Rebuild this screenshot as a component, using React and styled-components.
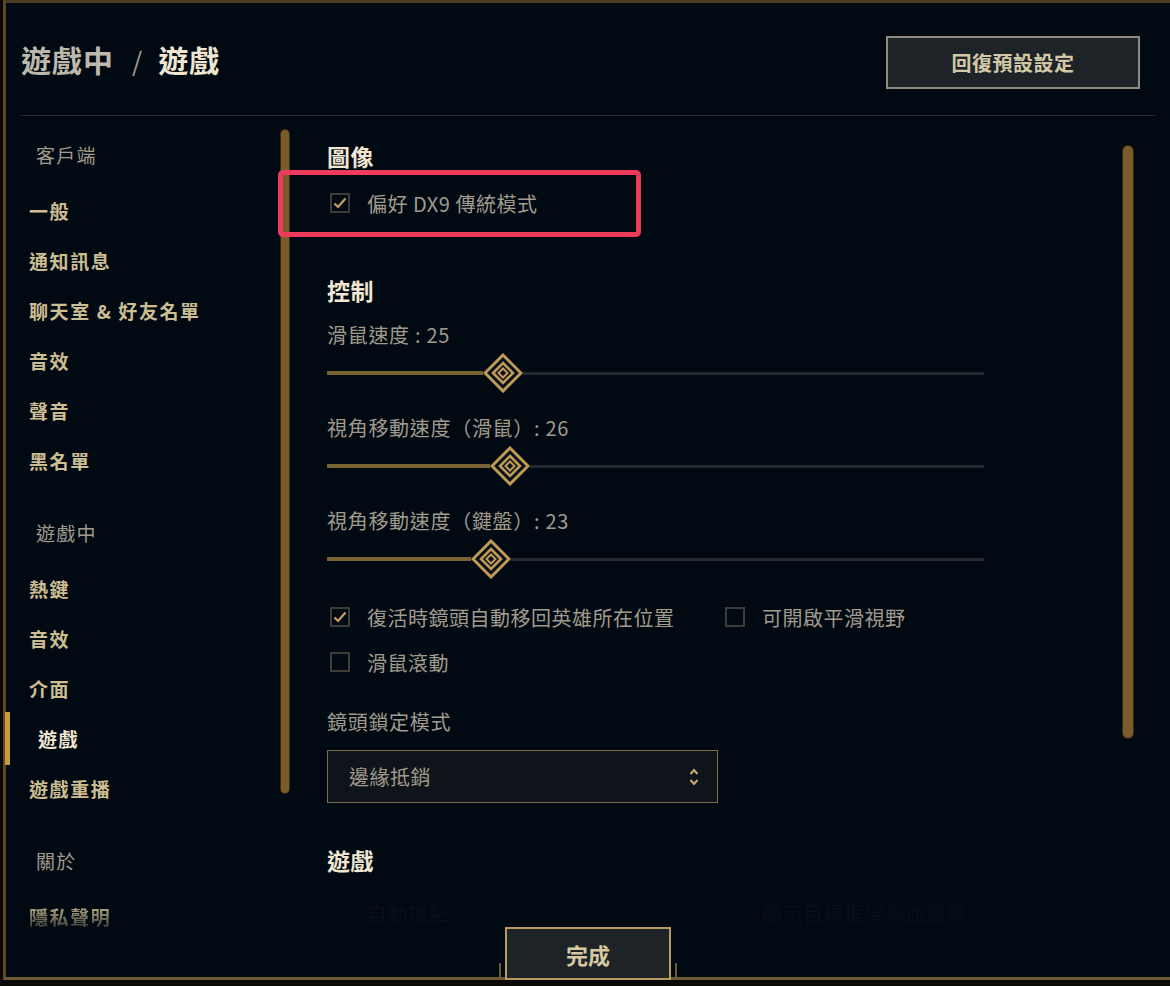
import React from 'react';
import styled, { createGlobalStyle, css } from 'styled-components';

const GlobalStyle = createGlobalStyle`
  html, body { margin: 0; padding: 0; background: #0b0906; }
  body { font-family: "Noto Sans CJK TC", "Noto Sans", sans-serif; overflow: hidden; }
  *, *::before, *::after { box-sizing: border-box; }
`;

const Page = styled.div`
  width: 1170px;
  height: 986px;
  padding-left: 3px;
  overflow: hidden;
  background: #0b0906;
`;

const Frame = styled.div`
  position: relative;
  width: 1167px;
  height: 980px;
  background: #010a13;
  border-top: 3px solid #4f3f22;
  border-left: 3px solid #5a4828;
  border-bottom: 3px solid #6e5b36;
  display: flex;
  flex-direction: column;
`;

const Header = styled.header`
  height: 112px;
  flex-shrink: 0;
  display: flex;
  align-items: center;
  justify-content: space-between;
  padding: 0 30px 0 15px;
`;

const Title = styled.h1`
  margin: 0;
  font-size: 30px;
  font-weight: 700;
  color: #c3beb2;
  display: flex;
  align-items: center;
  letter-spacing: 1px;
`;

const Crumb = styled.span`
  color: ${p => (p.$current ? '#f0e6d2' : '#bdb8ab')};
`;

const Slash = styled.span`
  font-weight: 400;
  font-size: 26px;
  color: #a09b8c;
  margin: 0 15px 0 18px;
`;

const ResetButton = styled.button`
  width: 254px;
  height: 53px;
  margin-top: 6px;
  background: #1e2328;
  border: 2px solid #8e8b84;
  box-shadow: 0 0 0 1px #05080c;
  color: #d2c7a6;
  font-family: inherit;
  font-size: 20px;
  font-weight: 700;
  letter-spacing: 0.5px;
`;

const Divider = styled.div`
  height: 1px;
  margin: 0 15px 0 14px;
  background: #242a31;
  flex-shrink: 0;
`;

const Body = styled.div`
  flex: 1;
  min-height: 0;
  display: flex;
`;

const Sidebar = styled.nav`
  width: 283px;
  flex-shrink: 0;
  display: flex;
`;

const NavList = styled.div`
  width: 275px;
  padding-top: 14px;
`;

const NavSection = styled.div`
  & + & { margin-top: 23px; }
`;

const NavHeader = styled.div`
  height: 50px;
  line-height: 50px;
  padding-left: 30px;
  margin-bottom: 5px;
  font-size: 19px;
  letter-spacing: 1.3px;
  color: #a09b8c;
`;

const NavItem = styled.div`
  position: relative;
  height: 50px;
  display: flex;
  align-items: center;
  padding-left: ${p => (p.$active ? '32px' : '23px')};
  font-size: 19px;
  font-weight: 700;
  color: ${p => (p.$active ? '#f0e6d2' : '#cdbe91')};
  letter-spacing: 1.6px;
  ${p => p.$active && css`
    &::before {
      content: '';
      position: absolute;
      left: -1px;
      top: -1px;
      width: 5px;
      height: 53px;
      background: #c89b3c;
    }
  `}
  ${p => p.$faded && css`
    -webkit-mask-image: linear-gradient(to bottom, rgba(0,0,0,0.85) 35%, rgba(0,0,0,0.25) 75%);
    mask-image: linear-gradient(to bottom, rgba(0,0,0,0.85) 35%, rgba(0,0,0,0.25) 75%);
  `}
`;

const ScrollThumb = styled.div`
  width: ${p => p.$w}px;
  height: ${p => p.$h}px;
  margin-top: ${p => p.$top}px;
  border-radius: 5px;
  background: #7a5c2c;
  box-shadow: 0 0 0 1px #3a2a12;
  flex-shrink: 0;
`;

const Content = styled.section`
  flex: 1;
  display: flex;
`;

const Main = styled.div`
  flex: 1;
  padding: 25px 0 0 38px;
`;

const SectionTitle = styled.h2`
  margin: ${p => p.$mt || 0}px 0 0;
  font-size: 23px;
  line-height: 30px;
  font-weight: 700;
  letter-spacing: 0.5px;
  color: #f0e6d2;
`;

const Highlight = styled.div`
  position: relative;
  margin-top: 17px;
  &::after {
    content: '';
    position: absolute;
    left: -49px;
    top: -18px;
    width: 363px;
    height: 67px;
    border: 5px solid #ee3b5b;
    border-radius: 5px;
    pointer-events: none;
  }
`;

const CheckRow = styled.label`
  height: 30px;
  display: flex;
  align-items: center;
  gap: 17px;
  padding-left: 3px;
  font-size: 20px;
  color: #a09b8c;
  letter-spacing: 0.5px;
`;

const Box = styled.span`
  width: 20px;
  height: 20px;
  flex-shrink: 0;
  border: 2px solid #3d3b35;
  display: flex;
  align-items: center;
  justify-content: center;
`;

const CheckGrid = styled.div`
  margin-top: 23px;
  display: grid;
  grid-template-columns: 395px auto;
  row-gap: 15px;
  opacity: ${p => (p.$faint ? 0.035 : 1)};
`;

const SliderBlock = styled.div`
  margin-top: ${p => p.$mt}px;
`;

const FieldLabel = styled.div`
  margin-top: ${p => p.$mt || 0}px;
  font-size: 20px;
  line-height: 26px;
  letter-spacing: 0.7px;
  color: #a09b8c;
`;

const SliderWrap = styled.div`
  width: 657px;
  height: 40px;
  margin-top: 5px;
  display: flex;
  align-items: center;
`;

const Fill = styled.div`
  height: 4px;
  background: #7a6332;
  flex-shrink: 0;
`;

const Rest = styled.div`
  flex: 1;
  height: 3px;
  background: #252a30;
`;

const ThumbSvg = styled.svg`
  width: 40px;
  height: 40px;
  flex-shrink: 0;
  display: block;
`;

const Select = styled.div`
  margin-top: 15px;
  width: 391px;
  height: 53px;
  padding: 0 18px 0 21px;
  display: flex;
  align-items: center;
  justify-content: space-between;
  background: #0f141a;
  border: 1px solid #7d6c4a;
  font-size: 20px;
  letter-spacing: 0.5px;
  color: #a09b8c;
`;

const Footer = styled.div`
  position: absolute;
  left: 493px;
  bottom: -3px;
  display: flex;
  align-items: flex-end;
  gap: 4px;
`;

const Notch = styled.div`
  width: 2px;
  height: 17px;
  background: #6e5b36;
`;

const DoneButton = styled.button`
  width: 166px;
  height: 53px;
  background: #1e2328;
  border: 2px solid #b99b60;
  color: #d6c9a0;
  font-family: inherit;
  font-size: 22px;
  font-weight: 700;
`;

function Checkbox({ checked, label }) {
  return (
    <CheckRow>
      <Box>
        {checked && (
          <svg width="14" height="12" viewBox="0 0 14 12">
            <path d="M1.5 6.5 L5 10 L12.5 1.5" fill="none" stroke="#c8a064" strokeWidth="2.2" />
          </svg>
        )}
      </Box>
      <span>{label}</span>
    </CheckRow>
  );
}

function Thumb() {
  return (
    <ThumbSvg viewBox="0 0 40 40">
      <path d="M20 2 L38 20 L20 38 L2 20 Z" fill="#06101a" stroke="#c19a55" strokeWidth="3" />
      <path d="M20 10 L30 20 L20 30 L10 20 Z" fill="#0b121a" stroke="#c19a55" strokeWidth="2.6" />
      <path d="M20 15.5 L24.5 20 L20 24.5 L15.5 20 Z" fill="none" stroke="#c19a55" strokeWidth="2" />
    </ThumbSvg>
  );
}

function Slider({ label, value, mt }) {
  const fill = value * 6.33 - 2;
  return (
    <SliderBlock $mt={mt}>
      <FieldLabel>{label}</FieldLabel>
      <SliderWrap>
        <Fill style={{ width: `${fill}px` }} />
        <Thumb />
        <Rest />
      </SliderWrap>
    </SliderBlock>
  );
}

const nav = [
  { header: '客戶端', items: ['一般', '通知訊息', '聊天室 & 好友名單', '音效', '聲音', '黑名單'] },
  { header: '遊戲中', items: ['熱鍵', '音效', '介面', '遊戲', '遊戲重播'] },
  { header: '關於', items: ['隱私聲明'] },
];

export default function App() {
  return (
    <>
      <GlobalStyle />
      <Page>
        <Frame>
          <Header>
            <Title>
              <Crumb>遊戲中</Crumb>
              <Slash>/</Slash>
              <Crumb $current>遊戲</Crumb>
            </Title>
            <ResetButton>回復預設設定</ResetButton>
          </Header>
          <Divider />
          <Body>
            <Sidebar>
              <NavList>
                {nav.map((sec, si) => (
                  <NavSection key={sec.header}>
                    <NavHeader>{sec.header}</NavHeader>
                    {sec.items.map(it => (
                      <NavItem
                        key={it}
                        $active={si === 1 && it === '遊戲'}
                        $faded={si === 2}
                      >
                        {it}
                      </NavItem>
                    ))}
                  </NavSection>
                ))}
              </NavList>
              <ScrollThumb $w={8} $h={663} $top={14} />
            </Sidebar>
            <Content>
              <Main>
                <SectionTitle>圖像</SectionTitle>
                <Highlight>
                  <Checkbox checked label="偏好 DX9 傳統模式" />
                </Highlight>
                <SectionTitle $mt={57}>控制</SectionTitle>
                <Slider label="滑鼠速度 : 25" value={25} mt={17} />
                <Slider label="視角移動速度（滑鼠）: 26" value={26} mt={22} />
                <Slider label="視角移動速度（鍵盤）: 23" value={23} mt={22} />
                <CheckGrid>
                  <Checkbox checked label="復活時鏡頭自動移回英雄所在位置" />
                  <Checkbox label="可開啟平滑視野" />
                  <Checkbox label="滑鼠滾動" />
                </CheckGrid>
                <FieldLabel $mt={32}>鏡頭鎖定模式</FieldLabel>
                <Select>
                  <span>邊緣抵銷</span>
                  <svg width="10" height="22" viewBox="0 0 10 22">
                    <path d="M1.5 8 L5 4 L8.5 8" fill="none" stroke="#c8aa6e" strokeWidth="2" />
                    <path d="M1.5 14 L5 18 L8.5 14" fill="none" stroke="#c8aa6e" strokeWidth="2" />
                  </svg>
                </Select>
                <SectionTitle $mt={42}>遊戲</SectionTitle>
                <CheckGrid $faint>
                  <Checkbox label="自動攻擊" />
                  <Checkbox label="顯示目標框架與血量條" />
                </CheckGrid>
              </Main>
              <ScrollThumb $w={10} $h={592} $top={30} style={{ marginRight: 37 }} />
            </Content>
          </Body>
          <Footer>
            <Notch />
            <DoneButton>完成</DoneButton>
            <Notch />
          </Footer>
        </Frame>
      </Page>
    </>
  );
}
